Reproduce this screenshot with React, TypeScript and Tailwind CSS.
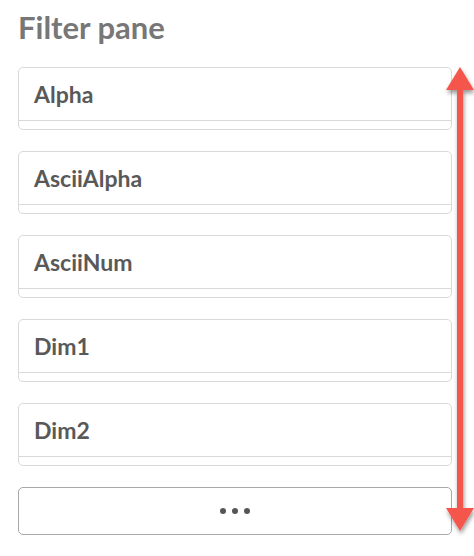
import React from "react";

const items = ["Alpha", "AsciiAlpha", "AsciiNum", "Dim1", "Dim2"];

export default function App() {
  return (
    <div className="relative w-[474px] h-[556px] bg-white overflow-hidden" style={{ fontFamily: "Lato, 'Open Sans', sans-serif" }}>
      <div className="pl-[18px] pr-[22px] pt-[10px]">
        <div className="text-[31px] font-bold text-[#777777] leading-[34px] h-[34px]">Filter pane</div>
        <div className="mt-[23px] flex flex-col gap-[21px]">
          {items.map((t) => (
            <div key={t} className="h-[63px] border-[1.5px] border-[#d9d9d9] rounded-[5px] flex flex-col">
              <div className="h-[53px] border-b-[1.5px] border-[#d9d9d9] flex items-center pl-[15px] text-[23px] font-bold text-[#595959]">
                {t}
              </div>
            </div>
          ))}
          <div className="h-[48px] border-[1.5px] border-[#a8a8a8] rounded-[5px] flex items-center justify-center gap-[6px]">
            <span className="w-[6px] h-[6px] rounded-full bg-[#555555]" />
            <span className="w-[6px] h-[6px] rounded-full bg-[#555555]" />
            <span className="w-[6px] h-[6px] rounded-full bg-[#555555]" />
          </div>
        </div>
      </div>
      <svg className="absolute left-[440px] top-[60px]" width="34" height="480" viewBox="0 0 34 480">
        <defs>
          <filter id="sh" x="-50%" y="-10%" width="200%" height="120%">
            <feDropShadow dx="1" dy="3" stdDeviation="2" floodColor="#000" floodOpacity="0.4" />
          </filter>
        </defs>
        <g filter="url(#sh)" fill="#f4564c">
          <rect x="17" y="24" width="6" height="426" />
          <polygon points="20,7 6,30 34,30" />
          <polygon points="20,471 6,448 34,448" />
        </g>
      </svg>
    </div>
  );
}
